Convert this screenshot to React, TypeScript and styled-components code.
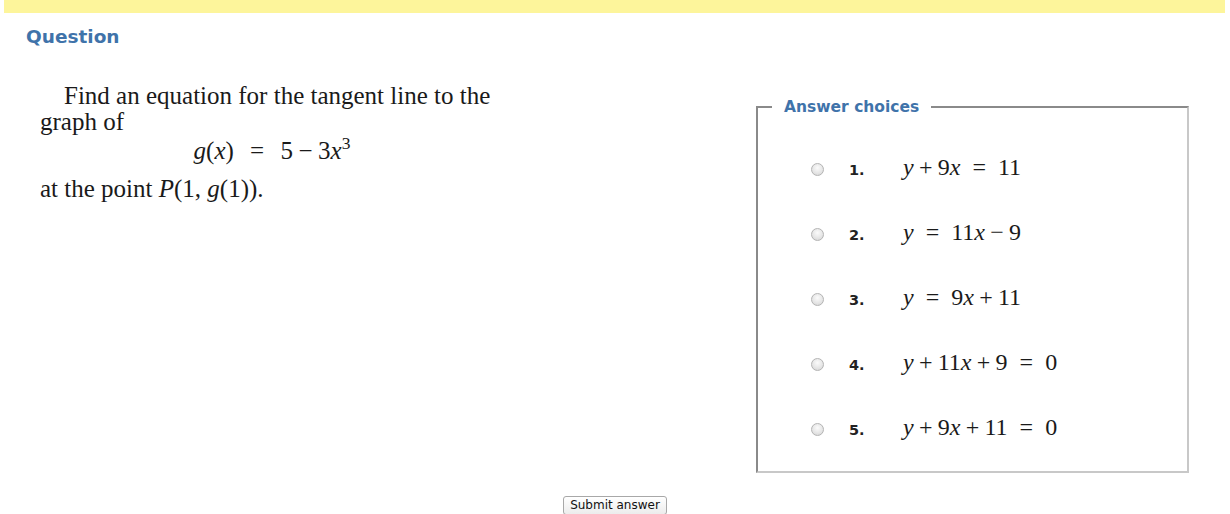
import React from "react";
import styled, {createGlobalStyle} from "styled-components";

const Global = createGlobalStyle`
  html, body {
    margin: 0;
    padding: 0;
    background: #fff;
  }
  body {
    font-family: "DejaVu Sans", Verdana, sans-serif;
    color: #111;
  }
`

const TopBar = styled.div`
  height: 13px;
  margin-left: 4px;
  width: 1221px;
  background: #fdf59b;
`

const Heading = styled.h2`
  margin: 0;
  padding: 12px 0 0 26px;
  font-family: "DejaVu Sans", Verdana, sans-serif;
  font-size: 18.5px;
  font-weight: bold;
  color: #3f73aa;
  line-height: 24px;
`

const Main = styled.div`
  display: flex;
  align-items: flex-start;
  padding: 34px 0 0 40px;
`

const QuestionText = styled.div`
  width: 460px;
  font-family: "Liberation Serif", "Times New Roman", serif;
  font-size: 25px;
  line-height: 26px;
  color: #1a1a1a;
`

const Para = styled.p<{ $indent?: boolean }>`
  margin: 0;
  white-space: nowrap;
  text-indent: ${p => (p.$indent ? "24px" : "0")};
`

const Display = styled.div`
  text-align: center;
  margin: 3px 0 12px;
  padding-left: 4px;
`

const Var = styled.i`
  font-style: italic;
`

const Rel = styled.span<{ $wide?: boolean }>`
  padding: 0 ${p => (p.$wide ? "0.65em" : "0.5em")};
`

const Op = styled.span`
  padding: 0 0.22em;
`

const Sup = styled.sup`
  font-size: 0.7em;
  vertical-align: 0.55em;
  line-height: 0;
`

const Choices = styled.fieldset`
  box-sizing: border-box;
  width: 433px;
  margin: 15px 0 0 256px;
  padding: 21px 0 0 0;
  height: 375px;
  border-width: 2px;
  border-style: solid;
  border-color: #8a8a8a #c8c8c8 #c8c8c8 #8a8a8a;
`

const Legend = styled.legend`
  margin-left: 14px;
  padding: 0 12px;
  font-family: "DejaVu Sans", Verdana, sans-serif;
  font-size: 15.5px;
  font-weight: bold;
  color: #3f73aa;
`

const Row = styled.label`
  display: flex;
  align-items: center;
  height: 65px;
  padding-left: 53px;
`

const Radio = styled.input.attrs({type: "radio", name: "answer"})`
  appearance: none;
  margin: 0;
  width: 13px;
  height: 13px;
  border-radius: 50%;
  border: 1px solid #b4b4b4;
  background: radial-gradient(circle at 50% 35%, #fbfbfb 0%, #e6e6e6 55%, #d2d2d2 100%);
  box-sizing: border-box;
`

const Num = styled.span`
  width: 54px;
  margin-left: 25px;
  font-family: "DejaVu Sans", Verdana, sans-serif;
  font-size: 14.5px;
  font-weight: bold;
  color: #222;
`

const MathLine = styled.span`
  font-family: "Liberation Serif", "Times New Roman", serif;
  font-size: 24px;
  color: #1a1a1a;
  position: relative;
  top: -2px;
`

const Footer = styled.div`
  display: flex;
  justify-content: center;
  padding-top: 23px;
`

const SubmitButton = styled.button`
  font-family: "DejaVu Sans", Verdana, sans-serif;
  font-size: 12px;
  padding: 1px 6px;
  height: 19px;
  line-height: 15px;
  color: #111;
  background: linear-gradient(#ffffff, #ececec);
  border: 1px solid #a8a8a8;
  border-radius: 3px;
`

const answers: React.ReactNode[] = [
    <><Var>y</Var><Op>+</Op>9<Var>x</Var><Rel>=</Rel>11</>,
    <><Var>y</Var><Rel>=</Rel>11<Var>x</Var><Op>−</Op>9</>,
    <><Var>y</Var><Rel>=</Rel>9<Var>x</Var><Op>+</Op>11</>,
    <><Var>y</Var><Op>+</Op>11<Var>x</Var><Op>+</Op>9<Rel>=</Rel>0</>,
    <><Var>y</Var><Op>+</Op>9<Var>x</Var><Op>+</Op>11<Rel>=</Rel>0</>,
]

function App() {
    return (
        <>
            <Global/>
            <TopBar/>
            <Heading>Question</Heading>
            <Main>
                <QuestionText>
                    <Para $indent>Find an equation for the tangent line to the</Para>
                    <Para>graph of</Para>
                    <Display>
                        <Var>g</Var>(<Var>x</Var>)<Rel $wide>=</Rel>5<Op>−</Op>3<Var>x</Var><Sup>3</Sup>
                    </Display>
                    <Para>at the point <Var>P</Var>(1, <Var>g</Var>(1)).</Para>
                </QuestionText>
                <Choices>
                    <Legend>Answer choices</Legend>
                    {answers.map((a, i) => (
                        <Row key={i}>
                            <Radio value={i + 1}/>
                            <Num>{i + 1}.</Num>
                            <MathLine>{a}</MathLine>
                        </Row>
                    ))}
                </Choices>
            </Main>
            <Footer>
                <SubmitButton>Submit answer</SubmitButton>
            </Footer>
        </>
    );
}

export default App;
